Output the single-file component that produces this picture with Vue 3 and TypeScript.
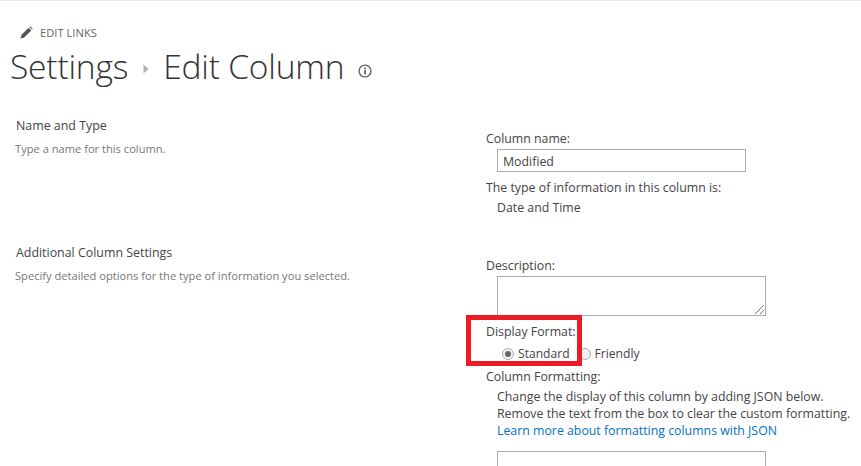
<script setup lang="ts">
const formatLines: string[] = [
  'Change the display of this column by adding JSON below.',
  'Remove the text from the box to clear the custom formatting.',
]
</script>

<template>
  <div class="page">
    <div class="topline"></div>
    <div class="edit-links">
      <svg class="pencil" width="13" height="13" viewBox="0 0 13 13">
        <path d="M0.5 12.5 L1.5 8.8 L8.6 1.7 L11.3 4.4 L4.2 11.5 Z" fill="#555" />
        <path d="M9.4 0.9 L10.2 0.3 L12.7 2.8 L12.1 3.6 Z" fill="#555" />
      </svg>
      <span>EDIT LINKS</span>
    </div>
    <div class="title">
      <span>Settings</span>
      <svg class="crumb" width="6" height="10" viewBox="0 0 6 10"><path d="M0.5 0.5 L5.5 5 L0.5 9.5 Z" fill="#b1b1b1" /></svg>
      <span>Edit Column</span>
      <svg class="info" width="14" height="14" viewBox="0 0 14 14">
        <circle cx="7" cy="7" r="5.9" fill="none" stroke="#666" stroke-width="1.4" />
        <rect x="6.1" y="6" width="1.8" height="4.3" fill="#666" />
        <rect x="6.1" y="3.5" width="1.8" height="1.6" fill="#666" />
      </svg>
    </div>

    <section class="row first">
      <div class="side">
        <h3>Name and Type</h3>
        <p>Type a name for this column.</p>
      </div>
      <div class="main">
        <div class="label">Column name:</div>
        <div class="field">Modified</div>
        <div class="label type-label">The type of information in this column is:</div>
        <div class="indent type-value">Date and Time</div>
      </div>
    </section>

    <section class="row second">
      <div class="side">
        <h3>Additional Column Settings</h3>
        <p>Specify detailed options for the type of information you selected.</p>
      </div>
      <div class="main">
        <div class="label">Description:</div>
        <div class="area">
          <svg class="grip" width="11" height="11" viewBox="0 0 11 11">
            <path d="M1 10 L10 1 M6 10 L10 6" stroke="#777" stroke-width="1" fill="none" />
          </svg>
        </div>
        <div class="label display-label">Display Format:</div>
        <div class="radios">
          <span class="radio checked"><i></i></span>
          <span class="radio-text">Standard</span>
          <span class="radio second-radio"></span>
          <span class="radio-text">Friendly</span>
        </div>
        <div class="label format-label">Column Formatting:</div>
        <div class="indent lines">
          <div v-for="line in formatLines" :key="line">{{ line }}</div>
          <a>Learn more about formatting columns with JSON</a>
        </div>
        <div class="area bottom"></div>
      </div>
    </section>

    <div class="highlight"></div>
  </div>
</template>

<style>
html, body { margin: 0; background: #fff; overflow: hidden; }
</style>

<style scoped>
.page {
  position: relative;
  width: 861px;
  height: 466px;
  overflow: hidden;
  background: #fff;
  color: #444;
  font-family: "Open Sans", "Noto Sans", sans-serif;
  font-size: 12.33px;
}
.topline { height: 1px; background: #ebebeb; }
.edit-links {
  display: flex;
  align-items: center;
  gap: 7px;
  height: 14px;
  margin-top: 24px;
  padding-left: 20px;
  font-size: 11.2px;
  color: #666;
}
.title {
  display: flex;
  align-items: center;
  height: 42px;
  margin-top: 6px;
  padding-left: 10px;
  font-size: 33.6px;
  font-weight: 300;
  color: #333;
  letter-spacing: -0.2px;
}
.crumb { margin: 5px 14px 0 15px; }
.info { margin: 10px 0 0 14px; }
.row { display: flex; }
.first { margin-top: 30px; height: 127px; }
.side { width: 486px; box-sizing: border-box; padding-left: 15px; }
.side h3 {
  margin: 0 0 0 1px;
  font-size: 12.4px;
  line-height: 17px;
  font-weight: 400;
  color: #444;
}
.side p {
  margin: 7px 0 0;
  font-size: 11.13px;
  line-height: 15px;
  color: #777;
}
.main { flex: 1; }
.label { line-height: 17px; color: #444; }
.first .main { padding-top: 13px; }
.field {
  box-sizing: border-box;
  width: 249px;
  height: 23px;
  margin: 2px 0 0 11px;
  padding-left: 5px;
  border: 1px solid #ababab;
  line-height: 23px;
  color: #444;
}
.type-label { margin-top: 7px; }
.type-value { margin-top: 3px; }
.indent { margin-left: 11px; line-height: 17px; }
.second .main { padding-top: 13px; }
.area {
  position: relative;
  box-sizing: border-box;
  width: 269px;
  height: 40px;
  margin: 2px 0 0 11px;
  border: 1px solid #ababab;
}
.grip { position: absolute; right: 0; bottom: 0; }
.display-label { margin-top: 7px; }
.radios {
  display: flex;
  align-items: center;
  height: 17px;
  margin: 5px 0 0 16px;
  font-size: 12.1px;
  line-height: 17px;
}
.radio {
  box-sizing: border-box;
  display: flex;
  align-items: center;
  justify-content: center;
  width: 12px;
  height: 12px;
  border: 1px solid #ababab;
  border-radius: 50%;
  background: #f2f2f2;
}
.radio i { width: 6px; height: 6px; border-radius: 50%; background: #666; }
.radio-text { margin-left: 4px; }
.second-radio { margin-left: 9px; }
.format-label { margin-top: 6px; }
.lines { margin-top: 3px; }
.lines a { color: #0072c6; }
.bottom { width: 269px; margin-top: 12px; }
.highlight {
  position: absolute;
  left: 466px;
  top: 315px;
  width: 106px;
  height: 41px;
  border: 5px solid #ed1c24;
}
</style>
